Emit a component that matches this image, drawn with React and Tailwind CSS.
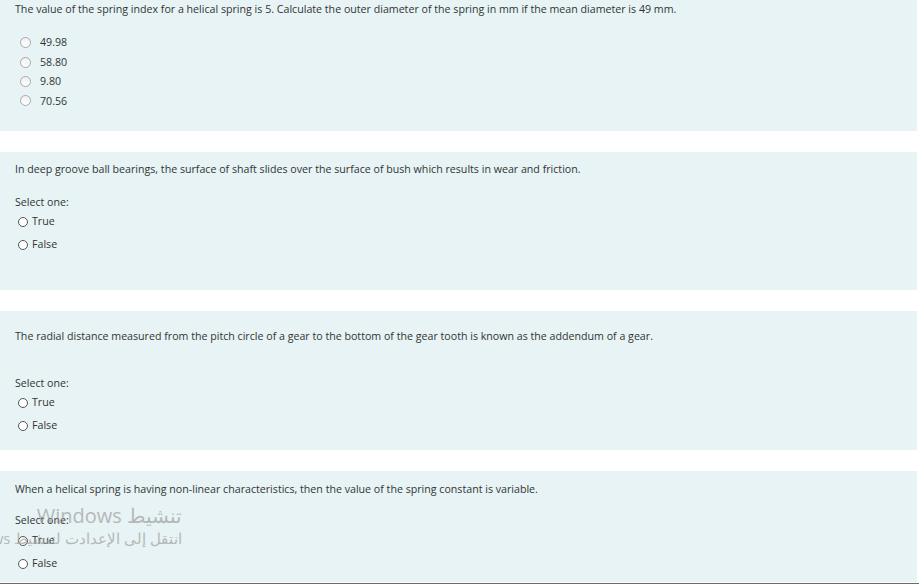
import React from "react";

const font = { fontFamily: '"Open Sans", "Noto Sans", sans-serif' };

function BigRadio() {
  return (
    <span className="inline-block w-[11px] h-[11px] rounded-full border border-[#a8a8a8] bg-gradient-to-b from-[#f0f0f0] to-white shrink-0" />
  );
}

function SmallRadio() {
  return (
    <span className="inline-block w-[10px] h-[10px] rounded-full border border-[#555] bg-white shrink-0" />
  );
}

function TFOptions() {
  return (
    <div className="flex flex-col">
      <div className="flex items-center gap-[4px] pl-[3px] h-[19px]">
        <SmallRadio />
        <span>True</span>
      </div>
      <div className="flex items-center gap-[4px] pl-[3px] h-[19px] mt-[4px]">
        <SmallRadio />
        <span>False</span>
      </div>
    </div>
  );
}

export default function App() {
  return (
    <div
      className="relative w-[919px] h-[584px] bg-white overflow-hidden text-[10.65px] leading-none text-[#333333]"
      style={font}
    >
      <div className="flex flex-col gap-[21px] w-[917px]">
        {/* Q1 */}
        <div className="bg-[#e7f3f5] h-[131px] pl-[15px] pt-[4px]">
          <p className="h-[11px] leading-[11px]">
            The value of the spring index for a helical spring is 5. Calculate the outer diameter of the spring in mm if the mean diameter is 49 mm.
          </p>
          <div className="flex flex-col mt-[18px] pl-[5px]">
            {["49.98", "58.80", "9.80", "70.56"].map((v) => (
              <div key={v} className="flex items-center gap-[9px] h-[19.4px]">
                <BigRadio />
                <span>{v}</span>
              </div>
            ))}
          </div>
        </div>

        {/* Q2 */}
        <div className="bg-[#e7f3f5] h-[138px] pl-[15px] pt-[12px]">
          <p className="h-[11px] leading-[11px]">
            In deep groove ball bearings, the surface of shaft slides over the surface of bush which results in wear and friction.
          </p>
          <p className="mt-[22px] h-[11px] leading-[11px]">Select one:</p>
          <div className="mt-[4px]">
            <TFOptions />
          </div>
        </div>

        {/* Q3 */}
        <div className="bg-[#e7f3f5] h-[139px] pl-[15px] pt-[20px]">
          <p className="h-[11px] leading-[11px]">
            The radial distance measured from the pitch circle of a gear to the bottom of the gear tooth is known as the addendum of a gear.
          </p>
          <p className="mt-[36px] h-[11px] leading-[11px]">Select one:</p>
          <div className="mt-[4px]">
            <TFOptions />
          </div>
        </div>

        {/* Q4 */}
        <div className="bg-[#e7f3f5] h-[111px] pl-[15px] pt-[13px]">
          <p className="h-[11px] leading-[11px]">
            When a helical spring is having non-linear characteristics, then the value of the spring constant is variable.
          </p>
          <p className="mt-[20px] h-[11px] leading-[11px]">Select one:</p>
          <div className="mt-[5px]">
            <TFOptions />
          </div>
        </div>
      </div>

      <div className="absolute left-0 bottom-0 w-full h-[1px] bg-[#6b6b6b]" />

      {/* Windows activation watermark */}
      <div className="absolute left-[-100px] top-[505px] w-[282px] flex flex-col items-end text-[#a0a0a0] opacity-70 pointer-events-none">
        <div className="text-[20px] leading-[22px] whitespace-nowrap" dir="ltr">
          Windows <span dir="rtl">تنشيط</span>
        </div>
        <div className="text-[15px] leading-[18px] mt-[2px] whitespace-nowrap" dir="rtl">
          انتقل إلى الإعدادت لتنشيط Windows
        </div>
      </div>
    </div>
  );
}
